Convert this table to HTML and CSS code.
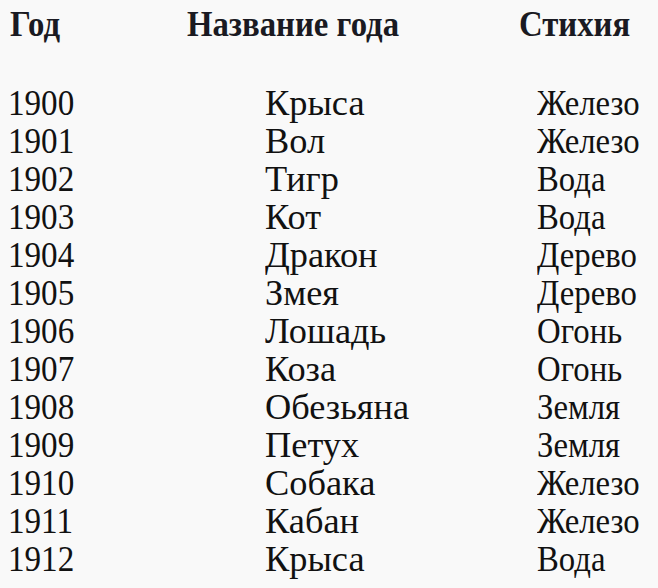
FILE: index.html
```html
<!DOCTYPE html>
<html lang="ru">
<head>
<meta charset="utf-8">
<link rel="stylesheet" href="styles.css">
</head>
<body>
<div class="table">
  <div class="row head">
    <div class="c1"><span>Год</span></div>
    <div class="c2"><span>Название года</span></div>
    <div class="c3"><span>Стихия</span></div>
  </div>
  <div class="body">
    <div class="row"><div class="c1"><span>1900</span></div><div class="c2"><span>Крыса</span></div><div class="c3"><span>Железо</span></div></div>
    <div class="row"><div class="c1"><span>1901</span></div><div class="c2"><span>Вол</span></div><div class="c3"><span>Железо</span></div></div>
    <div class="row"><div class="c1"><span>1902</span></div><div class="c2"><span>Тигр</span></div><div class="c3"><span>Вода</span></div></div>
    <div class="row"><div class="c1"><span>1903</span></div><div class="c2"><span>Кот</span></div><div class="c3"><span>Вода</span></div></div>
    <div class="row"><div class="c1"><span>1904</span></div><div class="c2"><span>Дракон</span></div><div class="c3"><span>Дерево</span></div></div>
    <div class="row"><div class="c1"><span>1905</span></div><div class="c2"><span>Змея</span></div><div class="c3"><span>Дерево</span></div></div>
    <div class="row"><div class="c1"><span>1906</span></div><div class="c2"><span>Лошадь</span></div><div class="c3"><span>Огонь</span></div></div>
    <div class="row"><div class="c1"><span>1907</span></div><div class="c2"><span>Коза</span></div><div class="c3"><span>Огонь</span></div></div>
    <div class="row"><div class="c1"><span>1908</span></div><div class="c2"><span>Обезьяна</span></div><div class="c3"><span>Земля</span></div></div>
    <div class="row"><div class="c1"><span>1909</span></div><div class="c2"><span>Петух</span></div><div class="c3"><span>Земля</span></div></div>
    <div class="row"><div class="c1"><span>1910</span></div><div class="c2"><span>Собака</span></div><div class="c3"><span>Железо</span></div></div>
    <div class="row"><div class="c1"><span>1911</span></div><div class="c2"><span>Кабан</span></div><div class="c3"><span>Железо</span></div></div>
    <div class="row"><div class="c1"><span>1912</span></div><div class="c2"><span>Крыса</span></div><div class="c3"><span>Вода</span></div></div>
  </div>
</div>
</body>
</html>
```
FILE: styles.css
```css
html, body {
  margin: 0;
  padding: 0;
  background: #f9f9f9;
}
body {
  width: 658px;
  height: 588px;
  overflow: hidden;
  font-family: "Liberation Serif", "Times New Roman", serif;
  color: #111;
}
.table {
  padding-top: 5px;
}
.row {
  display: grid;
  grid-template-columns: 265px 272px 1fr;
  font-size: 36px;
  line-height: 38px;
  height: 38px;
  white-space: nowrap;
}
.row span {
  display: inline-block;
  transform-origin: 0 50%;
}
.row .c1 span { transform: scaleX(0.92); }
.row .c2 span { transform: scaleX(1.01); }
.row .c3 span { transform: scaleX(0.91); }
.row .c1 { padding-left: 8px; }
.head {
  grid-template-columns: 187px 332px 1fr;
  font-weight: bold;
  color: #1a1a22;
}
.head .c1 { padding-left: 10px; }
.head span,
.head .c1 span,
.head .c2 span,
.head .c3 span { transform: scaleX(0.91); }
.body {
  margin-top: 41px;
}
```
